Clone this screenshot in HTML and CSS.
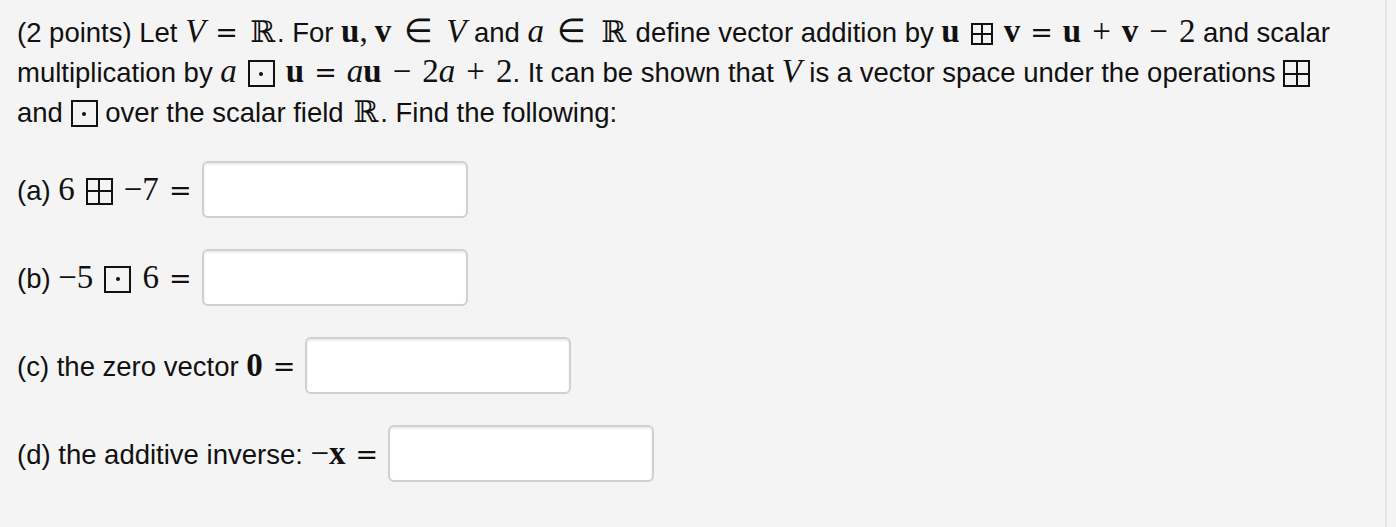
FILE: index.html
```html
<!DOCTYPE html>
<html>
<head>
<meta charset="utf-8">
<link rel="stylesheet" href="styles.css">
</head>
<body>
<div class="page">
  <div class="problem">
    <p class="intro">(2 points) Let <span class="m"><i>V</i><span class="rel eq">=</span><span class="bb">ℝ</span></span>. For <span class="m"><b>u</b>,<span class="thin"></span><b>v</b><span class="rel">∈</span><i>V</i></span> and <span class="m"><i>a</i><span class="rel">∈</span><span class="bb">ℝ</span></span> define vector addition by <span class="m"><b>u</b><span class="bin"><span class="op op-sm op-plus"></span></span><b>v</b><span class="rel eq">=</span><b>u</b><span class="bin">+</span><b>v</b><span class="bin">−</span>2</span> and scalar multiplication by <span class="m"><i>a</i><span class="bin"><span class="op op-dot"></span></span><b>u</b><span class="rel eq">=</span><i>a</i><b>u</b><span class="bin">−</span>2<i>a</i><span class="bin">+</span>2</span>. It can be shown that <span class="m"><i>V</i></span> is a vector space under the operations <span class="m"><span class="op op-plus"></span></span> and <span class="m"><span class="op op-dot"></span></span> over the scalar field <span class="m"><span class="bb">ℝ</span></span>. Find the following:</p>

    <div class="part">
      <span class="label">(a) <span class="m">6<span class="bin"><span class="op op-plus"></span></span>−7<span class="rel eq">=</span></span></span>
      <input class="answer" type="text">
    </div>
    <div class="part">
      <span class="label">(b) <span class="m">−5<span class="bin"><span class="op op-dot"></span></span>6<span class="rel eq">=</span></span></span>
      <input class="answer" type="text">
    </div>
    <div class="part">
      <span class="label">(c) the zero vector <span class="m"><b>0</b><span class="rel eq">=</span></span></span>
      <input class="answer" type="text">
    </div>
    <div class="part">
      <span class="label">(d) the additive inverse: <span class="m">−<b>x</b><span class="rel eq">=</span></span></span>
      <input class="answer" type="text">
    </div>
  </div>
</div>
</body>
</html>
```

FILE: styles.css
```css
html, body {
  margin: 0;
  padding: 0;
  background: #f4f4f4;
}

.page {
  width: 1387px;
  height: 527px;
  box-sizing: border-box;
  border-right: 2px solid #e4e4e4;
  background: #f4f4f4;
}

.problem {
  padding: 13px 30px 0 17px;
  font-family: "Liberation Sans", Arial, sans-serif;
  font-size: 27.5px;
  color: #111;
}

.intro {
  margin: 0 0 28px 0;
  line-height: 40px;
}

.m {
  font-family: "Liberation Serif", "Times New Roman", serif;
  font-size: 33px;
  line-height: 1;
  white-space: nowrap;
}

.m i {
  font-style: italic;
}

.m b {
  font-weight: bold;
}

.bb {
  font-family: "DejaVu Serif", serif;
  font-size: 30px;
  padding: 0 2px;
}

.rel {
  padding: 0 13px;
}

.eq {
  font-family: "DejaVu Serif", serif;
  font-size: 27px;
  padding: 0 10px;
}

.bin {
  padding: 0 11px;
}

.thin {
  display: inline-block;
  width: 7px;
}

.op {
  display: inline-block;
  position: relative;
  width: 27px;
  height: 27px;
  box-sizing: border-box;
  border: 2px solid #111;
  vertical-align: -5px;
}

.op-sm {
  width: 22px;
  height: 22px;
  vertical-align: -3px;
}

.op-plus::before {
  content: "";
  position: absolute;
  left: 50%;
  top: 0;
  bottom: 0;
  width: 2px;
  margin-left: -1px;
  background: #111;
}

.op-plus::after {
  content: "";
  position: absolute;
  top: 50%;
  left: 0;
  right: 0;
  height: 2px;
  margin-top: -1px;
  background: #111;
}

.op-dot::after {
  content: "";
  position: absolute;
  left: 50%;
  top: 50%;
  width: 4px;
  height: 4px;
  margin: -2px 0 0 -2px;
  border-radius: 50%;
  background: #111;
}

.part {
  display: flex;
  align-items: center;
  height: 57px;
  margin-bottom: 31px;
}

.label {
  white-space: nowrap;
}

.answer {
  margin-left: 0;
  width: 266px;
  height: 57px;
  box-sizing: border-box;
  background: #fff;
  border: 2px solid #d0d0d0;
  border-radius: 6px;
  box-shadow: inset 0 2px 2px rgba(0, 0, 0, 0.08);
  padding: 0 8px;
  font: inherit;
  outline: none;
}
```
